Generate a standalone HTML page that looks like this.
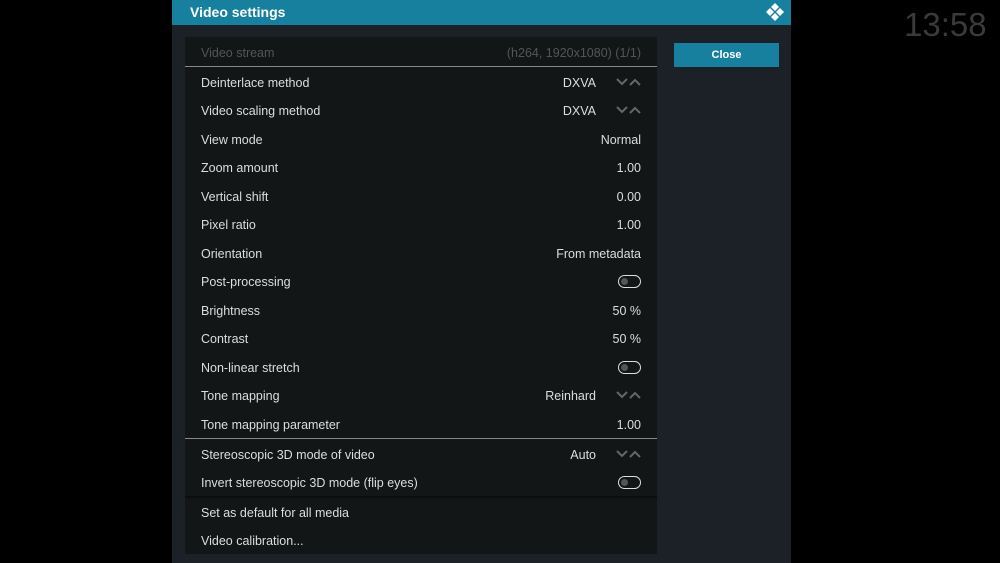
<!DOCTYPE html>
<html><head><style>
body{margin:0;width:1000px;height:563px;background:#000;position:relative;overflow:hidden;font-family:"Liberation Sans",sans-serif;}
.panel{position:absolute;left:172px;top:0;width:619px;height:563px;background:#1b2126;}
.hdr{position:absolute;left:172px;top:0;width:619px;height:25px;background:#17809e;}
.hdr span{position:absolute;left:18px;top:4px;color:#fff;font-size:14px;font-weight:bold;}
.list{position:absolute;left:185px;top:37px;width:472px;height:517px;background:#121617;}
.row{position:absolute;left:201px;width:440px;height:20px;color:#ddd;font-size:12.5px;line-height:20px;}
.row .v{position:absolute;right:0;top:0;}
.row .v.a{right:45px;}
.arr{position:absolute;right:0;top:5px;}
.tg{position:absolute;right:0;top:3px;width:21px;height:11px;border:1.5px solid #ddd;border-radius:7px;}
.tg:after{content:"";position:absolute;left:2px;top:2px;width:7px;height:7px;border-radius:50%;background:#555;}
.div{position:absolute;left:185px;width:472px;height:1px;background:#888;}
.div2{position:absolute;left:185px;width:472px;height:2px;background:#0b0d0e;}
.close{position:absolute;left:674px;top:43px;width:105px;height:24px;background:#17809e;color:#fff;font-size:11px;font-weight:bold;text-align:center;line-height:24px;}
.clock{position:absolute;left:904px;top:6px;color:#3a3a3a;font-size:33px;}
</style></head><body>
<div class="panel"></div>
<div class="hdr"><span>Video settings</span>
<svg style="position:absolute;left:592px;top:2px" width="22" height="22" viewBox="0 0 22 22"><g fill="#fff"><path d="M11 1l4 4-4 4-4-4z"/><path d="M6 6l4 4-4 4-4-4z"/><path d="M16 6l4 4-4 4-4-4z"/><path d="M11 11l4 4-4 4-4-4z"/></g></svg></div>
<div class="clock">13:58</div>
<div class="list"></div>
<div class="close">Close</div>
<div class="row" style="top:43px;color:#555">Video stream<span class="v">(h264, 1920x1080) (1/1)</span></div>
<div class="div" style="top:66px"></div>
<div class="row" style="top:73px">Deinterlace method<span class="v a">DXVA</span><svg class="arr" width="25" height="8"><path d="M1 1l5 5 5-5M14 7l5-5 5 5" fill="none" stroke="#666" stroke-width="2"/></svg></div>
<div class="row" style="top:101px">Video scaling method<span class="v a">DXVA</span><svg class="arr" width="25" height="8"><path d="M1 1l5 5 5-5M14 7l5-5 5 5" fill="none" stroke="#666" stroke-width="2"/></svg></div>
<div class="row" style="top:130px">View mode<span class="v">Normal</span></div>
<div class="row" style="top:158px">Zoom amount<span class="v">1.00</span></div>
<div class="row" style="top:187px">Vertical shift<span class="v">0.00</span></div>
<div class="row" style="top:215px">Pixel ratio<span class="v">1.00</span></div>
<div class="row" style="top:244px">Orientation<span class="v">From metadata</span></div>
<div class="row" style="top:272px">Post-processing<span class="tg"></span></div>
<div class="row" style="top:301px">Brightness<span class="v">50 %</span></div>
<div class="row" style="top:329px">Contrast<span class="v">50 %</span></div>
<div class="row" style="top:358px">Non-linear stretch<span class="tg"></span></div>
<div class="row" style="top:386px">Tone mapping<span class="v a">Reinhard</span><svg class="arr" width="25" height="8"><path d="M1 1l5 5 5-5M14 7l5-5 5 5" fill="none" stroke="#666" stroke-width="2"/></svg></div>
<div class="row" style="top:415px">Tone mapping parameter<span class="v">1.00</span></div>
<div class="div" style="top:438px"></div>
<div class="row" style="top:445px">Stereoscopic 3D mode of video<span class="v a">Auto</span><svg class="arr" width="25" height="8"><path d="M1 1l5 5 5-5M14 7l5-5 5 5" fill="none" stroke="#666" stroke-width="2"/></svg></div>
<div class="row" style="top:473px">Invert stereoscopic 3D mode (flip eyes)<span class="tg"></span></div>
<div class="div2" style="top:496px"></div>
<div class="row" style="top:503px">Set as default for all media</div>
<div class="row" style="top:531px">Video calibration...</div>
</body></html>
